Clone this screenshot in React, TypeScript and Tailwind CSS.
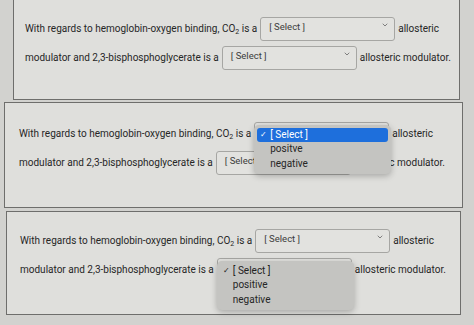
import { ChevronDown } from 'lucide-react';

type SelectProps = {
  open?: boolean;
  highlight?: boolean;
  options?: string[];
  className?: string;
};

function FakeSelect({ open, highlight, options = [], className = '' }: SelectProps) {
  return (
    <span className={`relative mx-[3px] inline-flex h-[24px] w-[135px] shrink-0 items-center justify-between rounded-[3px] border border-[#a6a6a3] bg-[#e2e2df] pl-[8px] pr-[5px] ${className}`}>
      <span className="-mt-[2px] text-[9.5px] text-[#3c3c3c]">[ Select ]</span>
      <ChevronDown className="-mt-[8px] h-[8px] w-[8px] text-[#6a6a6a]" strokeWidth={2.5} />
      {open && (
        <span className="absolute -left-px top-[2px] z-10 flex w-[137px] flex-col rounded-[5px] bg-[#c4c4c1] px-[3px] pb-[3px] pt-[3px] shadow-[0_2px_6px_rgba(0,0,0,0.25)]">
          <span
            className={`flex h-[14px] items-center rounded-[3px] pl-[3px] text-[10px] ${
              highlight ? 'bg-[#1e6fdc] text-white' : 'text-[#222]'
            }`}
          >
            <span className="mr-[2px] w-[8px] shrink-0 text-[8px] leading-none">✓</span>
            <span>[ Select ]</span>
          </span>
          {options.map((opt) => (
            <span key={opt} className="flex h-[14.5px] items-center pl-[13px] text-[10px] text-[#262626]">
              {opt}
            </span>
          ))}
        </span>
      )}
    </span>
  );
}

function Co2() {
  return (
    <>
      CO<sub className="text-[7px]">2</sub>
    </>
  );
}

type QuestionProps = {
  first?: SelectProps;
  second?: SelectProps;
};

function Question({ first = {}, second = {} }: QuestionProps) {
  return (
    <>
      <div className="flex h-[29px] items-center whitespace-nowrap">
        <span>
          With regards to hemoglobin-oxygen binding, <Co2 /> is a
        </span>
        <FakeSelect {...first} />
        <span>allosteric</span>
      </div>
      <div className="flex h-[29px] items-center whitespace-nowrap">
        <span>modulator and 2,3-bisphosphoglycerate is a</span>
        <FakeSelect {...second} />
        <span>allosteric modulator.</span>
      </div>
    </>
  );
}

export default function App() {
  return (
    <div className="h-[325px] w-[474px] overflow-hidden bg-[#d2d2cf] font-['Roboto',sans-serif] text-[10px] text-[#262626]">
      <div className="-mt-px ml-[13px] h-[101px] w-[447px] border border-[#6e6e6c] bg-[#dfdfdc] pl-[11px] pt-[14px]">
        <Question />
      </div>

      <div className="ml-[4px] mt-[2px] h-[106px] w-[459px] border border-[#6e6e6c] bg-[#dfdfdc] pl-[14px] pt-[16px]">
        <Question first={{ open: true, highlight: true, options: ['positve', 'negative'] }} />
      </div>

      <div className="ml-[6px] mt-[3px] h-[104px] w-[455px] border border-[#6e6e6c] bg-[#dfdfdc] pl-[13px] pt-[14px]">
        <Question second={{ open: true, options: ['positive', 'negative'] }} />
      </div>
    </div>
  );
}
